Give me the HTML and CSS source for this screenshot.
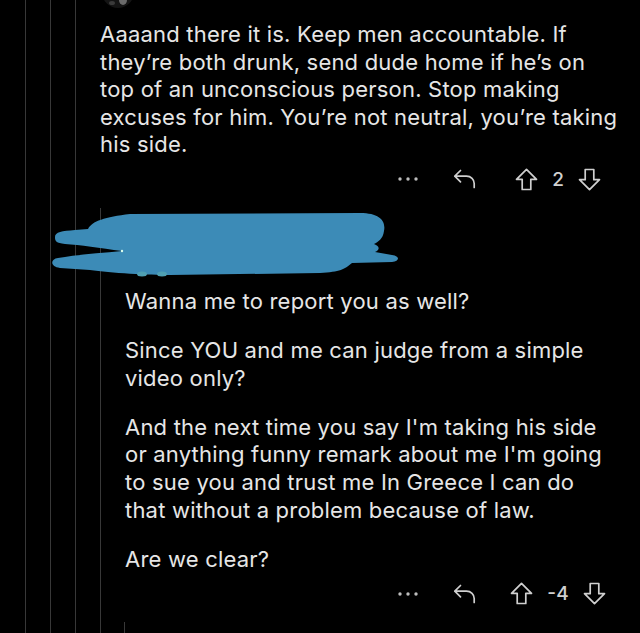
FILE: index.html
```html
<!DOCTYPE html>
<html lang="en">
<head>
<meta charset="utf-8">
<title>Comment thread</title>
<link rel="stylesheet" href="styles.css">
</head>
<body>
<div class="thread">
  <div class="indent first">
    <div class="indent">
      <div class="indent">
        <article class="comment c1">
          <header class="comment-head">
            <span class="avatar">
              <svg viewBox="0 0 32 32" width="32" height="32" aria-hidden="true">
                <circle cx="16" cy="16" r="16" fill="#141414"/>
                <ellipse cx="21" cy="24" rx="4" ry="5" fill="#6a6a6a"/>
                <ellipse cx="10" cy="27" rx="3" ry="2" fill="#3a3a3a"/>
              </svg>
            </span>
          </header>
          <div class="body">
            <p>Aaaand there it is. Keep men accountable. If they’re both drunk, send dude home if he’s on top of an unconscious person. Stop making excuses for him. You’re not neutral, you’re taking his side.</p>
          </div>
          <div class="actions">
            <span class="act dots"><svg viewBox="0 0 20 4" width="20" height="4"><circle cx="2" cy="2" r="1.7"/><circle cx="10" cy="2" r="1.7"/><circle cx="18" cy="2" r="1.7"/></svg></span>
            <span class="act reply"><svg viewBox="0 0 23 20" width="23" height="20"><path d="M7.5 1.5 L1.8 7.2 L7.5 12.9 M1.8 7.2 H13.5 C18 7.2 21.2 10.5 21.2 14.5 V18.5"/></svg></span>
            <span class="act vote">
              <svg class="arrow" viewBox="0 0 23 23" width="23" height="23"><path d="M11.5 1.3 L21.5 11.3 H15.8 V21.5 H7.2 V11.3 H1.5 Z"/></svg>
              <span class="score">2</span>
              <svg class="arrow" viewBox="0 0 23 23" width="23" height="23"><path d="M11.5 21.7 L21.5 11.7 H15.8 V1.5 H7.2 V11.7 H1.5 Z"/></svg>
            </span>
          </div>
        </article>
        <div class="indent">
          <article class="comment c2">
            <header class="comment-head tall">
              <svg class="redact" viewBox="50 208 352 72" width="352" height="72" aria-hidden="true">
                <path d="M55 238 C55 233 62 232 75 231 L88 230 C92 222 105 218 130 215 L360 214 C380 214 386 222 384 232 C383 240 378 243 374 245 C380 247 380 251 375 253 L392 256 C400 257 400 262 392 263 L352 264 C345 270 340 273 320 274 L170 276 C150 276 110 274 90 271 L60 269 C50 268 50 260 58 259 C75 256 100 254 122 252 C100 249 80 246 65 245 C56 244 55 242 55 238 Z"/>
                <ellipse class="bump" cx="142" cy="275" rx="5" ry="2.5"/>
                <ellipse class="bump" cx="162" cy="275" rx="5" ry="2.5"/>
                <circle cx="122" cy="252" r="1.2" fill="#dfe"/>
              </svg>
            </header>
            <div class="body">
              <p>Wanna me to report you as well?</p>
              <p>Since YOU and me can judge from a simple video only?</p>
              <p>And the next time you say I'm taking his side or anything funny remark about me I'm going to sue you and trust me In Greece I can do that without a problem because of law.</p>
              <p>Are we clear?</p>
            </div>
            <div class="actions">
              <span class="act dots"><svg viewBox="0 0 20 4" width="20" height="4"><circle cx="2" cy="2" r="1.7"/><circle cx="10" cy="2" r="1.7"/><circle cx="18" cy="2" r="1.7"/></svg></span>
              <span class="act reply"><svg viewBox="0 0 23 20" width="23" height="20"><path d="M7.5 1.5 L1.8 7.2 L7.5 12.9 M1.8 7.2 H13.5 C18 7.2 21.2 10.5 21.2 14.5 V18.5"/></svg></span>
              <span class="act vote">
                <svg class="arrow" viewBox="0 0 23 23" width="23" height="23"><path d="M11.5 1.3 L21.5 11.3 H15.8 V21.5 H7.2 V11.3 H1.5 Z"/></svg>
                <span class="score">-4</span>
                <svg class="arrow" viewBox="0 0 23 23" width="23" height="23"><path d="M11.5 21.7 L21.5 11.7 H15.8 V1.5 H7.2 V11.7 H1.5 Z"/></svg>
              </span>
            </div>
          </article>
          <div class="indent stub-indent">
            <div class="stub"></div>
          </div>
        </div>
      </div>
    </div>
  </div>
</div>
</body>
</html>
```

FILE: styles.css
```css
html, body {
  margin: 0;
  padding: 0;
  background: #000;
  height: 100%;
  overflow: hidden;
}

body {
  font-family: Inter, "Liberation Sans", sans-serif;
  color: #e6e6e6;
}

.thread {
  display: flex;
  flex-direction: column;
  width: 640px;
}

.indent {
  display: flex;
  flex-direction: column;
  margin-left: 24px;
  border-left: 1px solid #383838;
}

.indent.first {
  margin-left: 25px;
}

.comment {
  display: flex;
  flex-direction: column;
  padding-bottom: 8px;
}

.c1 {
  margin-top: -24px;
  padding-left: 24px;
}

.c2 {
  padding-left: 24px;
}

.comment-head {
  display: flex;
  align-items: center;
  height: 32px;
  margin-bottom: 13px;
}

.comment-head.tall {
  position: relative;
  height: 80px;
  margin-bottom: 0;
}

.avatar {
  display: block;
  width: 32px;
  height: 32px;
  margin-left: 2px;
}

.redact {
  position: absolute;
  left: -75px;
  top: -1px;
}

.redact path {
  fill: #3c8bb7;
}

.redact .bump {
  fill: #4f9fb2;
}

.body {
  padding-right: 22px;
  font-size: 22px;
  line-height: 27.6px;
  letter-spacing: 0.2px;
}

.body p {
  margin: 0 0 21.5px;
}

.body p:last-child {
  margin-bottom: 0;
}

.actions {
  display: flex;
  align-items: center;
  justify-content: flex-end;
  height: 41px;
  padding-right: 32px;
  color: #c9c9c9;
}

.act {
  display: flex;
  align-items: center;
  justify-content: center;
}

.dots, .reply {
  width: 56px;
}

.dots svg circle {
  fill: #bdbdbd;
}

.reply {
  margin-right: 16px;
}

.reply svg path, .arrow path {
  fill: none;
  stroke: #cfcfcf;
  stroke-width: 1.7;
  stroke-linecap: round;
  stroke-linejoin: round;
}

.vote {
  width: 100px;
  gap: 14px;
}

.score {
  font-size: 19px;
  font-weight: 500;
  line-height: 1;
  color: #d0d0d0;
}

.stub-indent {
  margin-left: 23px;
}

.stub {
  height: 20px;
}
```
